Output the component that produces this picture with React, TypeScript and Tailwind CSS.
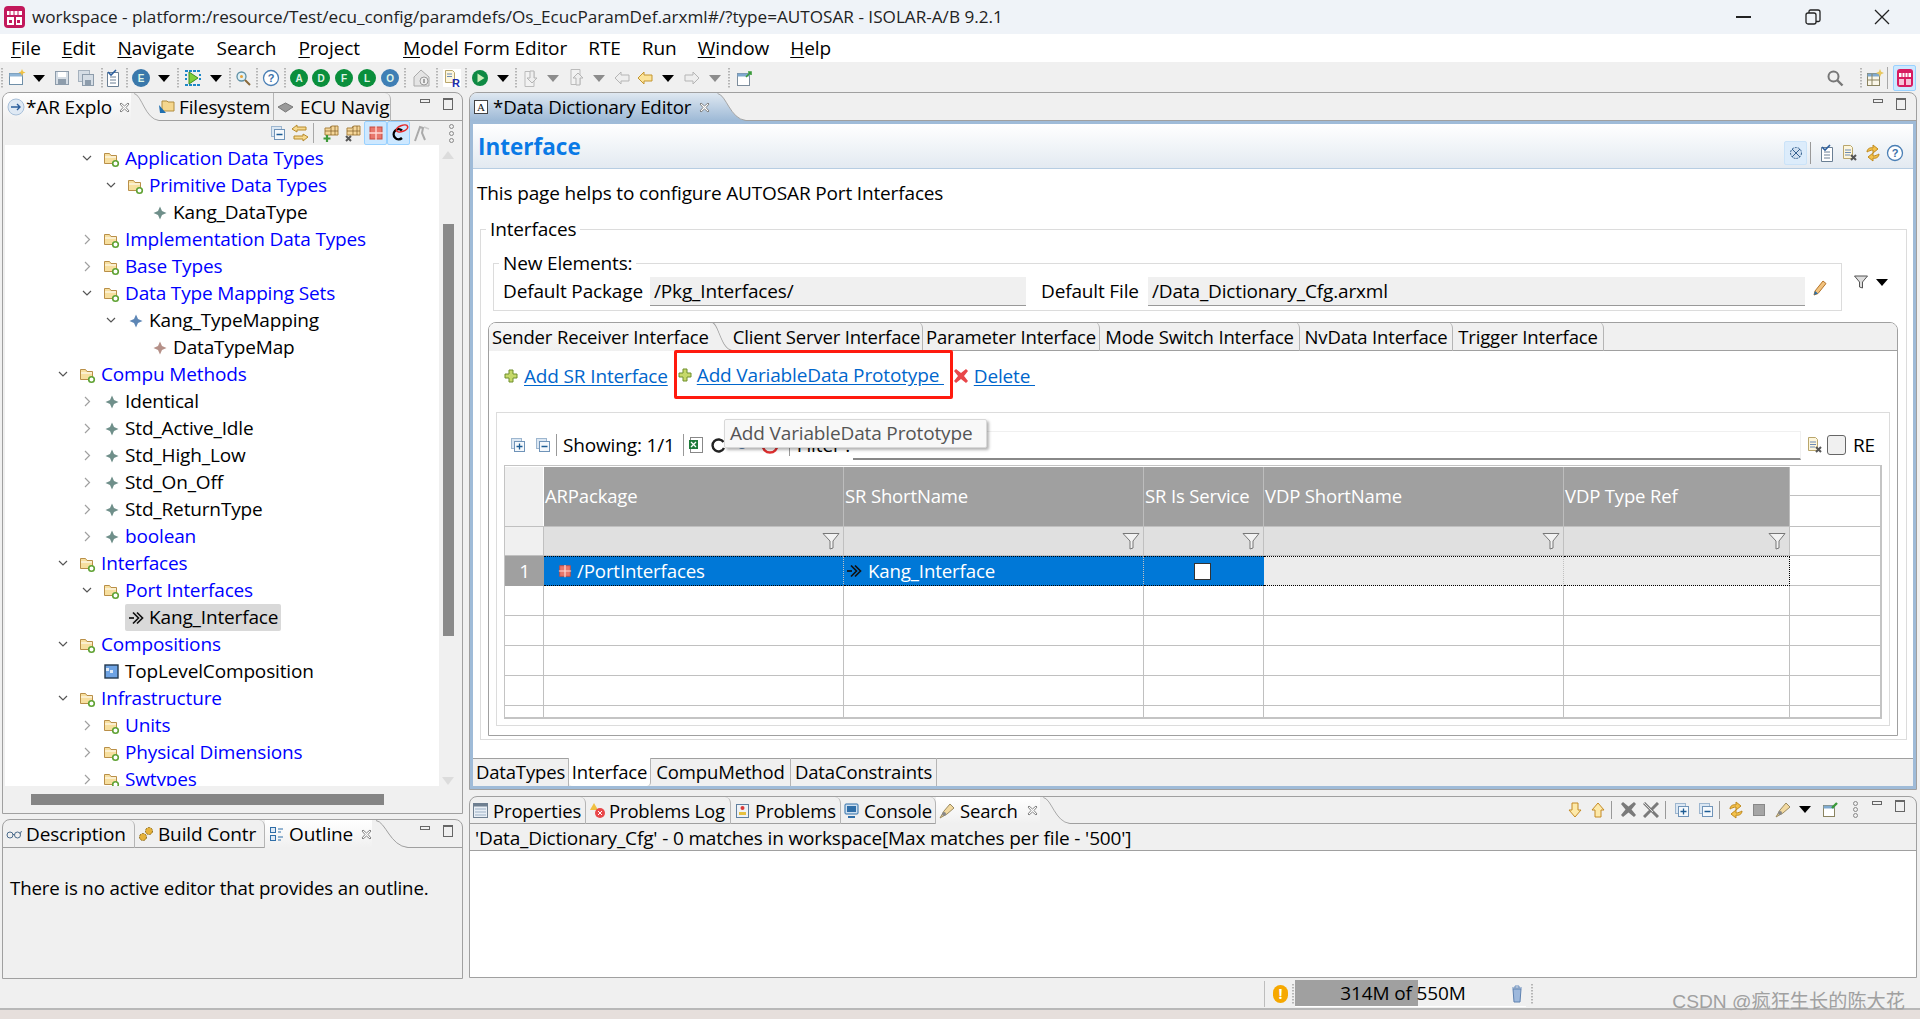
import React from "react";

const F = ({ cls = "" }: { cls?: string }) => (
  <svg width="17" height="18" viewBox="0 0 17 18" className={cls}>
    <path d="M1.5 3.5h5l1.5 2h5.5v8h-12z" fill="#f7df9f" stroke="#b98f48" />
    <path d="M2 7h11" stroke="#fff" />
    <circle cx="12.5" cy="13.5" r="2.8" fill="#fff" stroke="#5fa233" strokeWidth="1.6" />
  </svg>
);
const Star = ({ c = "#6f8f8a" }: { c?: string }) => (
  <svg width="14" height="14" viewBox="0 0 14 14">
    <path d="M7 0.5 L9 5 L13.5 7 L9 9 L7 13.5 L5 9 L0.5 7 L5 5 Z" fill={c} />
  </svg>
);
const ChevD = () => (
  <svg width="10" height="7" viewBox="0 0 10 7"><path d="M1 1l4 4 4-4" fill="none" stroke="#555" strokeWidth="1.2" /></svg>
);
const ChevR = () => (
  <svg width="7" height="11" viewBox="0 0 7 11"><path d="M1 1l4.5 4.5L1 10" fill="none" stroke="#a0a0a0" strokeWidth="1.2" /></svg>
);
const Arrow = ({ c = "#000" }: { c?: string }) => (
  <svg width="12" height="7" viewBox="0 0 12 7"><path d="M0 0h12L6 7z" fill={c} /></svg>
);
const Dots = () => (
  <svg width="2" height="20" viewBox="0 0 2 20">
    {[1, 4, 7, 10, 13, 16, 19].map((y) => <rect key={y} x="0" y={y - 1} width="2" height="1.5" fill="#b5b5b5" />)}
  </svg>
);
const Badge = ({ t, c = "#0a8f3c" }: { t: string; c?: string }) => (
  <div className="w-[18px] h-[18px] rounded-full flex items-center justify-center text-[10px] font-bold text-[#dff5e6] font-['Liberation_Sans',sans-serif]" style={{ background: c }}>{t}</div>
);
const Close = () => (
  <svg width="11" height="11" viewBox="0 0 11 11" className="shrink-0">
    <path d="M1 2l1-1 3.5 3L9 1l1 1-3 3.5L10 9l-1 1-3.5-3L2 10l-1-1 3-3.5z" fill="#fff" stroke="#777" strokeWidth="0.9" />
  </svg>
);
const MinMax = () => (
  <div className="flex items-start gap-[13px]">
    <div className="w-[10px] h-[4px] border border-[#666] mt-[1px]" />
    <div className="w-[10px] h-[12px] border border-[#666] border-t-[2px]" />
  </div>
);
const Plus = () => (
  <svg width="14" height="14" viewBox="0 0 14 14"><path d="M5 1h4v4h4v4H9v4H5V9H1V5h4z" fill="#c6d96a" stroke="#6f8f2c" /></svg>
);
const Expand = ({ minus = false }: { minus?: boolean }) => (
  <svg width="16" height="16" viewBox="0 0 16 16">
    <rect x="1.5" y="1.5" width="10" height="10" fill="#dbe7f3" stroke="#9db6cf" />
    <rect x="4.5" y="4.5" width="10" height="10" fill="#f4f8fc" stroke="#6f93b8" />
    <path d="M6.5 9.5h6" stroke="#1d5c94" strokeWidth="1.3" />
    {!minus && <path d="M9.5 6.5v6" stroke="#1d5c94" strokeWidth="1.3" />}
  </svg>
);
const Funnel = () => (
  <svg width="18" height="18" viewBox="0 0 18 18">
    <path d="M1 1.5h16L11 9v7l-3 1V9z" fill="#f2f2f2" stroke="#777" />
  </svg>
);
const SmallFunnel = () => (
  <svg width="14" height="14" viewBox="0 0 14 14"><path d="M0.5 1h13L8.5 7v6l-3-1V7z" fill="#ddd" stroke="#555" /></svg>
);
const Sync = () => (
  <svg width="18" height="18" viewBox="0 0 18 18">
    <path d="M3 8c0-3 3-5 6-4V1l5 4-5 4V6C7 6 5 7 3 8z" fill="#f3c14b" stroke="#c08a1e" />
    <path d="M15 10c0 3-3 5-6 4v3l-5-4 5-4v3c2 0 4-1 6-2z" fill="#f3c14b" stroke="#c08a1e" />
  </svg>
);
const Help = () => (
  <svg width="18" height="18" viewBox="0 0 18 18">
    <circle cx="9" cy="9" r="7.5" fill="#fff" stroke="#4a7fb5" strokeWidth="1.3" />
    <text x="9" y="13" textAnchor="middle" fontSize="11" fontWeight="700" fill="#3a70a8" fontFamily="Liberation Sans">?</text>
  </svg>
);
const CheckDoc = () => (
  <svg width="16" height="19" viewBox="0 0 16 19">
    <path d="M2.5 3.5h11v14h-11z" fill="#fff" stroke="#6a7f94" />
    <path d="M5 8h6M5 11h6M5 14h6" stroke="#6a7f94" />
    <path d="M3 3l3 3 5-5" fill="none" stroke="#2b5e9e" strokeWidth="1.6" />
  </svg>
);
const DocX = () => (
  <svg width="18" height="18" viewBox="0 0 18 18">
    <path d="M2.5 1.5h7l2 2v11h-9z" fill="#fdf6dc" stroke="#b9a66c" />
    <path d="M4 6h6M4 8.5h6M4 11h5" stroke="#6c8bb5" />
    <path d="M10 11l5 5m0-5l-5 5" stroke="#555" strokeWidth="2" />
  </svg>
);
const FolderTb = ({ x = false }: { x?: boolean }) => (
  <svg width="19" height="19" viewBox="0 0 19 19">
    <path d="M3 4h5l1.5-2H16v9H3z" fill="#f6d79a" stroke="#a9823f" />
    <path d="M9 2v9M13 2v9M3 7h13" stroke="#7b5a24" strokeWidth=".7" />
    {x ? <path d="M2 12l5 5m0-5l-5 5" stroke="#555" strokeWidth="2" /> : <path d="M5 11v7M1.5 14.5h7" stroke="#3f9a3a" strokeWidth="2.2" />}
  </svg>
);
const RedGrid = ({ s = 16 }: { s?: number }) => (
  <svg width={s} height={s} viewBox="0 0 16 16">
    <rect x="2" y="2" width="12" height="12" fill="#e8776c" stroke="#c84a3e" />
    <path d="M8 1v14M1 8h14" stroke="#ffd9d4" strokeWidth="1.4" />
  </svg>
);
const Iface = ({ c = "#111" }: { c?: string }) => (
  <svg width="16" height="14" viewBox="0 0 16 14">
    <path d="M0 7h5" stroke={c} strokeWidth="1.7" />
    <path d="M4 1.5l5.5 5.5L4 12.5M8 1.5l5.5 5.5L8 12.5" fill="none" stroke={c} strokeWidth="1.7" />
  </svg>
);

function Row({ d, open, leaf, icon, text, blue, hl }: { d: "0" | "1" | "2" | "3"; open?: boolean; leaf?: boolean; icon: React.ReactNode; text: string; blue?: boolean; hl?: boolean }) {
  const pad = { "0": "pl-[49px]", "1": "pl-[73px]", "2": "pl-[97px]", "3": "pl-[121px]" }[d];
  return (
    <div className={`h-[27px] shrink-0 flex items-center ${pad}`}>
      <div className="w-[18px] flex justify-center">{!leaf && (open ? <ChevD /> : <ChevR />)}</div>
      <div className={hl ? "ml-[5px] w-[24px] h-[27px] flex items-center justify-center bg-[#d9d9d9] rounded-l-[2px]" : "w-[29px] flex justify-center pr-[1px] pl-[3px]"}>{icon}</div>
      <span className={`leading-[27px] ${blue ? "text-[#0000ff]" : "text-black"} ${hl ? "bg-[#d9d9d9] pr-[3px] rounded-r-[2px]" : ""}`}>{text}</span>
    </div>
  );
}

const TabCurve = ({ fill = "#f0f0f0", w = 36, h = 28, id }: { fill?: string; w?: number; h?: number; id?: string }) => (
  <svg width={w} height={h} viewBox="0 0 36 28" preserveAspectRatio="none" className="shrink-0 self-stretch relative">
    {id && (
      <defs>
        <linearGradient id={id} x1="0" y1="0" x2="0" y2="1">
          <stop offset="0" stopColor="#dfe8f1" />
          <stop offset="1" stopColor="#9db9d6" />
        </linearGradient>
      </defs>
    )}
    <path d="M0 0H4C14 2 18 26 36 27.5V28H0Z" fill={id ? `url(#${id})` : fill} />
    <path d="M4 0.5C14 2 18 26 36 27.5" fill="none" stroke="#a0a0a0" />
  </svg>
);

const Link = ({ children }: { children: React.ReactNode }) => (
  <span className="text-[#0066cc] underline underline-offset-[2px] whitespace-pre">{children}</span>
);

function M({ first, rest, cls }: { first: string; rest: string; cls: string }) {
  return <span className={cls}><span className="underline underline-offset-[2px]">{first}</span>{rest}</span>;
}

function EmptyRow({ h = "h-[30px]" }: { h?: string }) {
  return (
    <div className={`flex ${h} shrink-0`}>
      <div className="w-[39px] border-r border-b border-[#c0c0c0]" />
      {["w-[300px]", "w-[300px]", "w-[120px]", "w-[300px]", "w-[226px]"].map((w, i) => (
        <div key={i} className={`${w} border-r border-b border-[#c0c0c0]`} />
      ))}
      <div className="flex-1 border-b border-[#c0c0c0]" />
    </div>
  );
}

export default function App() {
  return (
    <div className="w-[1920px] h-[1019px] overflow-hidden flex flex-col bg-[#f0f0f0] text-black text-[19px] whitespace-nowrap font-['Open_Sans','Noto_Sans',sans-serif] tracking-[-0.15px]">
      {/* Title bar */}
      <div className="h-[34px] shrink-0 bg-[#eff3f8] flex items-center">
        <svg width="24" height="24" viewBox="0 0 24 24" className="ml-[2px]">
          <rect x="2" y="1" width="21" height="22" rx="4" fill="#c2185b" />
          <rect x="5" y="6" width="15" height="4" fill="#fff" />
          <path d="M8 6v4M12 6v4M16 6v4" stroke="#c2185b" />
          <rect x="5" y="12" width="7" height="8" fill="#fff" /><rect x="14" y="12" width="6" height="8" fill="#fff" />
          <rect x="7" y="15" width="3" height="3" fill="#c2185b" /><rect x="15" y="15" width="3" height="3" fill="#c2185b" />
        </svg>
        <span className="ml-[6px] text-[17.15px] tracking-normal text-[#222]">workspace - platform:/resource/Test/ecu_config/paramdefs/Os_EcucParamDef.arxml#/?type=AUTOSAR - ISOLAR-A/B 9.2.1</span>
        <div className="ml-auto flex items-center">
          <div className="w-[15px] h-[1.5px] bg-[#222] mr-[54px]" />
          <svg width="16" height="16" viewBox="0 0 16 16" className="mr-[53px]"><rect x="1" y="4" width="10" height="11" rx="2" fill="none" stroke="#222" strokeWidth="1.3" /><path d="M4 4V2.5C4 1.7 4.6 1 5.5 1H13c1 0 2 1 2 2v8c0 1-.7 1.5-1.5 1.5H11" fill="none" stroke="#222" strokeWidth="1.3" /></svg>
          <svg width="16" height="16" viewBox="0 0 16 16" className="mr-[30px]"><path d="M1 1l14 14M15 1L1 15" stroke="#222" strokeWidth="1.3" /></svg>
        </div>
      </div>
      {/* Menu */}
      <div className="h-[28px] shrink-0 bg-white flex items-center tracking-[-0.05px]">
        <M first="F" rest="ile" cls="ml-[11px]" />
        <M first="E" rest="dit" cls="ml-[21px]" />
        <M first="N" rest="avigate" cls="ml-[22px]" />
        <span className="ml-[22px]">Search</span>
        <M first="P" rest="roject" cls="ml-[22px]" />
        <M first="M" rest="odel Form Editor" cls="ml-[43px]" />
        <span className="ml-[21px]">RTE</span>
        <span className="ml-[21px]">Run</span>
        <M first="W" rest="indow" cls="ml-[21px]" />
        <M first="H" rest="elp" cls="ml-[21px]" />
      </div>
      {/* Main toolbar */}
      <div className="h-[30px] shrink-0 flex items-center pt-[2px]">
        <div className="ml-[1px] w-[2px]"><Dots /></div>
        <div className="ml-[4px] w-[20px] flex justify-center">
          <svg width="18" height="18" viewBox="0 0 18 18"><rect x="1.5" y="4.5" width="13" height="11" fill="#fff" stroke="#6f8fa8" /><rect x="1.5" y="4.5" width="13" height="3" fill="#8fb5d6" /><path d="M14 0l1 2.5 2.5 1-2.5 1-1 2.5-1-2.5-2.5-1 2.5-1z" fill="#f0c040" /></svg>
        </div>
        <div className="ml-[5px] w-[14px] flex justify-center"><Arrow /></div>
        <div className="ml-[6px] w-[20px] flex justify-center"><svg width="16" height="16" viewBox="0 0 16 16"><rect x="1.5" y="1.5" width="13" height="13" fill="#d5dde5" stroke="#8d9cab" /><rect x="4" y="2" width="8" height="5" fill="#fff" /><rect x="4" y="9" width="8" height="5" fill="#8d9cab" /></svg></div>
        <div className="ml-[4px] w-[20px] flex justify-center"><svg width="18" height="18" viewBox="0 0 18 18"><rect x="1.5" y="1.5" width="11" height="11" fill="#d5dde5" stroke="#a5b1bd" /><rect x="5.5" y="5.5" width="11" height="11" fill="#d5dde5" stroke="#8d9cab" /><rect x="8" y="11" width="6" height="5" fill="#8d9cab" /></svg></div>
        <div className="ml-[5px] w-[2px]"><Dots /></div>
        <div className="w-[20px] flex justify-center"><CheckDoc /></div>
        <div className="ml-[3px] w-[2px]"><Dots /></div>
        <div className="ml-[3px] w-[20px] flex justify-center"><Badge t="E" c="#3a78ab" /></div>
        <div className="ml-[6px] w-[14px] flex justify-center"><Arrow /></div>
        <div className="ml-[6px] w-[2px]"><Dots /></div>
        <div className="ml-[4px] w-[20px] flex justify-center"><svg width="18" height="18" viewBox="0 0 18 18"><path d="M1 2h16M1 16h16" stroke="#1e88c7" strokeWidth="2" strokeDasharray="3 1" /><path d="M5 3l9 6-9 6z" fill="#7fcf3a" stroke="#3f8f1f" /><path d="M2 5v8M16 5v8" stroke="#1e88c7" strokeWidth="2" strokeDasharray="2 2" /></svg></div>
        <div className="ml-[6px] w-[14px] flex justify-center"><Arrow /></div>
        <div className="ml-[6px] w-[2px]"><Dots /></div>
        <div className="ml-[2px] w-[20px] flex justify-center"><svg width="16" height="16" viewBox="0 0 16 16"><circle cx="6.5" cy="6.5" r="4.5" fill="#dff1f5" stroke="#5d8fa5" strokeWidth="1.3" /><circle cx="6.5" cy="6.5" r="1.5" fill="#e8a23a" /><path d="M10 10l5 5" stroke="#8a6a3a" strokeWidth="2" /></svg></div>
        <div className="ml-[3px] w-[2px]"><Dots /></div>
        <div className="ml-[3px] w-[20px] flex justify-center"><Help /></div>
        <div className="ml-[3px] w-[2px]"><Dots /></div>
        <div className="ml-[3px] w-[20px] flex justify-center"><Badge t="A" /></div>
        <div className="ml-[2px] w-[20px] flex justify-center"><Badge t="D" /></div>
        <div className="ml-[3px] w-[20px] flex justify-center"><Badge t="F" /></div>
        <div className="ml-[3px] w-[20px] flex justify-center"><Badge t="L" /></div>
        <div className="ml-[3px] w-[20px] flex justify-center"><Badge t="O" c="#3f7fb5" /></div>
        <div className="ml-[4px] w-[2px]"><Dots /></div>
        <div className="ml-[5px] w-[20px] flex justify-center"><svg width="17" height="18" viewBox="0 0 17 18"><path d="M8 1L1 8v9h15V8z" fill="#e4e4e4" stroke="#aaa" /><circle cx="11" cy="12" r="4" fill="#eee" stroke="#999" /><path d="M11 10v4" stroke="#888" strokeWidth="1.5" /></svg></div>
        <div className="ml-[5px] w-[2px]"><Dots /></div>
        <div className="ml-[4px] w-[20px] flex justify-center"><svg width="18" height="18" viewBox="0 0 18 18"><rect width="18" height="18" fill="#fff" /><path d="M2.5 1.5h7l2 2v10h-9z" fill="#fdf6dc" stroke="#b9a66c" /><path d="M4 5h5M4 7.5h5" stroke="#6c8bb5" /><text x="9" y="18" fontSize="11" fontWeight="700" fill="#1a2db0" fontFamily="Liberation Sans">R</text></svg></div>
        <div className="ml-[3px] w-[2px]"><Dots /></div>
        <div className="ml-[3px] w-[20px] flex justify-center"><svg width="18" height="18" viewBox="0 0 18 18"><circle cx="9" cy="9" r="8" fill="#0f8a44" /><path d="M6.5 4.5l7 4.5-7 4.5z" fill="#cdeebb" /></svg></div>
        <div className="ml-[6px] w-[14px] flex justify-center"><Arrow /></div>
        <div className="ml-[5px] w-[2px]"><Dots /></div>
        <div className="ml-[4px] w-[20px] flex justify-center"><svg width="16" height="20" viewBox="0 0 16 20"><path d="M2 3.5h9v15H2z" fill="#f2f2f2" stroke="#bbb" /><path d="M7 3v7H4l5 5 5-5h-3V3z" fill="#eee" stroke="#b5b5b5" /></svg></div>
        <div className="ml-[5px] w-[14px] flex justify-center"><Arrow c="#8c8c8c" /></div>
        <div className="ml-[7px] w-[20px] flex justify-center"><svg width="16" height="20" viewBox="0 0 16 20"><path d="M2 1.5h9v15H2z" fill="#f2f2f2" stroke="#bbb" /><path d="M7 17v-7H4l5-5 5 5h-3v7z" fill="#eee" stroke="#b5b5b5" /></svg></div>
        <div className="ml-[5px] w-[14px] flex justify-center"><Arrow c="#8c8c8c" /></div>
        <div className="ml-[6px] w-[20px] flex justify-center"><svg width="16" height="14" viewBox="0 0 16 14"><path d="M1 7l6-6v3h8v6H7v3z" fill="#eee" stroke="#b5b5b5" /></svg></div>
        <div className="ml-[3px] w-[20px] flex justify-center"><svg width="16" height="14" viewBox="0 0 16 14"><path d="M1 7l6-6v3h8v6H7v3z" fill="#fbe39a" stroke="#c4952f" /></svg></div>
        <div className="ml-[6px] w-[14px] flex justify-center"><Arrow /></div>
        <div className="ml-[7px] w-[20px] flex justify-center"><svg width="16" height="14" viewBox="0 0 16 14"><path d="M15 7L9 1v3H1v6h8v3z" fill="#eee" stroke="#b5b5b5" /></svg></div>
        <div className="ml-[6px] w-[14px] flex justify-center"><Arrow c="#8c8c8c" /></div>
        <div className="ml-[6px] w-[2px]"><Dots /></div>
        <div className="ml-[4px] w-[20px] flex justify-center"><svg width="17" height="17" viewBox="0 0 17 17"><rect x="1.5" y="3.5" width="12" height="12" fill="#fff" stroke="#7d8d9c" /><rect x="1.5" y="3.5" width="12" height="3" fill="#7fa9cf" /><path d="M10 7l5-5m-3 0h3v3" fill="none" stroke="#3a9a3a" strokeWidth="1.6" /></svg></div>
        <div className="ml-auto w-[20px] flex justify-center"><svg width="18" height="18" viewBox="0 0 18 18"><circle cx="7.5" cy="7.5" r="5" fill="none" stroke="#777" strokeWidth="2" /><path d="M11 11l5.5 5.5" stroke="#777" strokeWidth="2.4" /></svg></div>
        <div className="ml-[15px] w-[2px]"><Dots /></div>
        <div className="ml-[3px] w-[20px] flex justify-center"><svg width="18" height="18" viewBox="0 0 18 18"><rect x="1.5" y="4.5" width="12" height="12" fill="#faf6e8" stroke="#8a8360" /><rect x="1.5" y="4.5" width="12" height="3" fill="#7fa9cf" /><path d="M6 5v11M1 11h12" stroke="#8a8360" /><path d="M14 0l1.2 2.8L18 4l-2.8 1.2L14 8l-1.2-2.8L10 4l2.8-1.2z" fill="#e8c860" /></svg></div>
        <div className="ml-[2px] w-px h-[22px] bg-[#a8a8a8]" />
        <div className="ml-[5px] mr-[4px] w-[23px] h-[26px] bg-[#cde8ff] border border-[#99d1ff] rounded-[2px] flex items-center justify-center">
          <svg width="18" height="20" viewBox="0 0 18 20"><rect x="1" y="1" width="16" height="18" rx="3" fill="#d81b60" /><rect x="3" y="5" width="12" height="4" fill="#fff" /><path d="M6 5v4M9 5v4M12 5v4" stroke="#d81b60" /><rect x="3" y="11" width="5" height="6" fill="#f6c4d8" /><rect x="10" y="11" width="5" height="6" fill="#f6c4d8" /></svg>
        </div>
      </div>
      {/* Main */}
      <div className="h-[887px] shrink-0 flex pl-[2px] pr-[3px] gap-[6px]">
        {/* Left column */}
        <div className="w-[461px] shrink-0 flex flex-col gap-[5px]">
          <div className="h-[722px] shrink-0 flex flex-col border border-[#a0a0a0] rounded-t-[8px] overflow-hidden">
            <div className="h-[28px] shrink-0 flex relative">
              <div className="absolute left-0 right-0 bottom-0 h-px bg-[#a0a0a0]" />
              <div className="relative flex items-center pl-[4px] bg-linear-to-b from-white to-[#f0f0f0] w-[128px]">
                <svg width="18" height="18" viewBox="0 0 18 18" className="shrink-0"><circle cx="9" cy="9" r="8" fill="#dfe9f4" stroke="#a7bfd8" /><path d="M4 9h9M10 6l3 3-3 3" fill="none" stroke="#2a5d9c" strokeWidth="1.4" /></svg>
                <span className="ml-[1px]">*AR Explo</span>
                <span className="ml-[7px] flex"><Close /></span>
              </div>
              <TabCurve w={28} />
              <div className="relative flex items-center -ml-[1px] w-[116px] border-r border-[#b5b5b5]">
                <svg width="18" height="16" viewBox="0 0 18 16" className="shrink-0"><path d="M4 2h5l1 1h6v9H4z" fill="#f5d78e" stroke="#b08c3f" /><path d="M1 6l7 8H2z" fill="#1f6fb0" /></svg>
                <span className="ml-[3px]">Filesystem</span>
              </div>
              <div className="relative flex items-center pl-[3px] w-[117px] border-r border-[#b5b5b5] rounded-tr-[6px]">
                <svg width="17" height="11" viewBox="0 0 17 11" className="shrink-0"><path d="M8.5 1L16 5l-7.5 5L1 5z" fill="#9a9a9a" stroke="#777" /></svg>
                <span className="ml-[6px]">ECU Navig</span>
              </div>
              <div className="relative ml-auto mr-[9px] mt-[5px]"><MinMax /></div>
            </div>
            <div className="h-[24px] shrink-0 flex items-center relative">
              <div className="ml-[265px] w-[20px] flex justify-center"><Expand minus /></div>
              <div className="ml-[2px] w-[20px] flex justify-center"><svg width="18" height="18" viewBox="0 0 18 18"><path d="M1 5l5-4v2h9v3H6v2z" fill="#f6d98f" stroke="#b78a2c" /><path d="M17 13l-5 4v-2H3v-3h9v-2z" fill="#f6d98f" stroke="#b78a2c" /></svg></div>
              <div className="ml-[3px] w-px h-[20px] bg-[#a8a8a8]" />
              <div className="ml-[7px] w-[20px] flex justify-center"><FolderTb /></div>
              <div className="ml-[2px] w-[20px] flex justify-center"><FolderTb x /></div>
              <div className="ml-[1px] w-[23px] h-[24px] bg-[#cde8ff] border border-[#99d1ff] rounded-[2px] flex items-center justify-center"><RedGrid /></div>
              <div className="w-[23px] h-[24px] bg-[#cde8ff] border border-[#99d1ff] rounded-[2px] flex items-center justify-center">
                <svg width="20" height="20" viewBox="0 0 20 20">
                  <path d="M13 7.5A5 5 0 1 0 13 15" fill="none" stroke="#000" strokeWidth="2.4" />
                  <ellipse cx="13" cy="5.5" rx="6" ry="3" fill="none" stroke="#e52a2a" strokeWidth="1.6" transform="rotate(-20 13 5.5)" />
                </svg>
              </div>
              <div className="w-[23px] flex justify-center"><svg width="19" height="17" viewBox="0 0 19 17"><path d="M3 16L8 2l3 1-1 5 3 7" fill="none" stroke="#aaa" strokeWidth="2" /><path d="M12 2l5 2" stroke="#ccc" strokeWidth="1.5" /></svg></div>
              <div className="ml-[14px] w-[8px] flex flex-col items-center gap-[2px]">
                {[0, 1, 2].map((i) => <div key={i} className="w-[5px] h-[5px] rounded-full border border-[#888]" />)}
              </div>
            </div>
            <div className="flex-1 flex min-h-0">
              <div className="flex-1 flex flex-col min-h-0">
                <div className="h-[641px] shrink-0 w-[434px] ml-[2px] bg-white overflow-hidden flex flex-col">
                  <Row d="1" open icon={<F />} text="Application Data Types" blue />
                  <Row d="2" open icon={<F />} text="Primitive Data Types" blue />
                  <Row d="3" leaf icon={<Star />} text="Kang_DataType" />
                  <Row d="1" icon={<F />} text="Implementation Data Types" blue />
                  <Row d="1" icon={<F />} text="Base Types" blue />
                  <Row d="1" open icon={<F />} text="Data Type Mapping Sets" blue />
                  <Row d="2" open icon={<Star c="#5d86b5" />} text="Kang_TypeMapping" />
                  <Row d="3" leaf icon={<Star c="#b59088" />} text="DataTypeMap" />
                  <Row d="0" open icon={<F />} text="Compu Methods" blue />
                  <Row d="1" icon={<Star />} text="Identical" />
                  <Row d="1" icon={<Star />} text="Std_Active_Idle" />
                  <Row d="1" icon={<Star />} text="Std_High_Low" />
                  <Row d="1" icon={<Star />} text="Std_On_Off" />
                  <Row d="1" icon={<Star />} text="Std_ReturnType" />
                  <Row d="1" icon={<Star />} text="boolean" blue />
                  <Row d="0" open icon={<F />} text="Interfaces" blue />
                  <Row d="1" open icon={<F />} text="Port Interfaces" blue />
                  <Row d="2" leaf icon={<Iface />} text="Kang_Interface" hl />
                  <Row d="0" open icon={<F />} text="Compositions" blue />
                  <Row d="1" leaf icon={<svg width="15" height="15" viewBox="0 0 15 15"><rect x="1" y="1" width="13" height="13" fill="#6ea3e4" stroke="#23384f" strokeWidth="1.4" /><rect x="2" y="4" width="3" height="3" fill="#dfeaf6" /><rect x="6" y="6" width="3" height="3" fill="#dfeaf6" /></svg>} text="TopLevelComposition" />
                  <Row d="0" open icon={<F />} text="Infrastructure" blue />
                  <Row d="1" icon={<F />} text="Units" blue />
                  <Row d="1" icon={<F />} text="Physical Dimensions" blue />
                  <Row d="1" icon={<F />} text="Swtypes" blue />
                </div>
                <div className="h-[11px] mt-[8px] ml-[28px] w-[353px] bg-[#858585]" />
              </div>
              <div className="w-[23px] shrink-0 flex flex-col items-center pr-[5px]">
                <svg width="12" height="8" viewBox="0 0 12 8" className="mt-[6px]"><path d="M6 0l6 8H0z" fill="#dcdcdc" /></svg>
                <div className="w-[11px] h-[412px] mt-[65px] bg-[#8a8a8a]" />
                <svg width="12" height="8" viewBox="0 0 12 8" className="mt-[141px]"><path d="M6 8L12 0H0z" fill="#dcdcdc" /></svg>
              </div>
            </div>
          </div>
          <div className="h-[160px] shrink-0 flex flex-col border border-[#a0a0a0] rounded-t-[8px] overflow-hidden">
            <div className="h-[28px] shrink-0 flex relative">
              <div className="absolute left-0 right-0 bottom-0 h-px bg-[#a0a0a0]" />
              <div className="relative flex items-center pl-[3px] w-[132px] border-r border-[#b5b5b5] rounded-tr-[6px]">
                <svg width="16" height="10" viewBox="0 0 16 10" className="shrink-0"><circle cx="4" cy="6" r="3" fill="none" stroke="#4a6a8a" /><circle cx="11.5" cy="6" r="3" fill="none" stroke="#4a6a8a" /><path d="M7 5.5h1.5M14 5l1.5-3" stroke="#4a6a8a" /></svg>
                <span className="ml-[4px]">Description</span>
              </div>
              <div className="relative flex items-center pl-[3px] w-[130px] border-r border-[#b5b5b5] rounded-tr-[6px]">
                <svg width="17" height="17" viewBox="0 0 17 17" className="shrink-0"><circle cx="11" cy="5" r="3.5" fill="#e6b23a" stroke="#8a6a1f" strokeDasharray="2 1" /><circle cx="5" cy="11" r="3.5" fill="#e6b23a" stroke="#8a6a1f" strokeDasharray="2 1" /></svg>
                <span className="ml-[3px]">Build Contr</span>
              </div>
              <div className="relative flex items-center pl-[5px] bg-linear-to-b from-white to-[#f0f0f0] w-[107px]">
                <svg width="14" height="16" viewBox="0 0 14 16" className="shrink-0"><rect x=".5" y="1.5" width="5" height="5" fill="#dfe9f4" stroke="#2f6ea8" /><rect x=".5" y="9.5" width="5" height="5" fill="#dfe9f4" stroke="#2f6ea8" /><path d="M8 3h5M8 6h3M8 11h5M8 14h3" stroke="#2f6ea8" /></svg>
                <span className="ml-[5px]">Outline</span>
                <span className="ml-[8px] flex"><Close /></span>
              </div>
              <TabCurve w={36} />
              <div className="relative ml-auto mr-[9px] mt-[5px]"><MinMax /></div>
            </div>
            <div className="pl-[7px] pt-[27px] leading-[26px] text-[18.7px]">There is no active editor that provides an outline.</div>
          </div>
        </div>
        {/* Right column */}
        <div className="flex-1 min-w-0 flex flex-col gap-[6px]">
          <div className="h-[698px] shrink-0 flex flex-col border border-[#a0a0a0] rounded-t-[8px] overflow-hidden">
            <div className="h-[28px] shrink-0 flex relative">
              <div className="absolute left-0 right-0 bottom-0 h-px bg-[#a0a0a0]" />
              <div className="relative flex items-center pl-[3px] w-[244px] bg-linear-to-b from-[#dfe8f1] to-[#9db9d6]">
                <svg width="16" height="16" viewBox="0 0 16 16" className="shrink-0"><rect x="1.5" y="1.5" width="13" height="13" fill="#fff" stroke="#444" /><text x="8" y="12" textAnchor="middle" fontSize="11" fontFamily="Liberation Serif" fill="#111">A</text></svg>
                <span className="ml-[4px] text-[18.7px]">*Data Dictionary Editor</span>
                <span className="ml-[8px] flex shrink-0"><Close /></span>
              </div>
              <TabCurve id="edTab" w={32} />
              <div className="relative ml-auto mr-[10px] mt-[5px]"><MinMax /></div>
            </div>
            <div className="flex-1 min-h-0 flex flex-col border-[3px] border-[#9fbbd8]">
              <div className="h-[45px] shrink-0 flex items-center bg-linear-to-b from-white to-[#e3eaf1] border-b border-[#b7cde2]">
                <span className="ml-[5px] pt-[2px] text-[22.5px] font-bold text-[#0a7ae6] tracking-normal">Interface</span>
                <div className="ml-auto mr-[8px] mt-[14px] flex items-center">
                  <div className="w-[23px] h-[24px] bg-[#dcecfb] border border-[#cbe3f8] rounded-[2px] flex items-center justify-center"><svg width="14" height="14" viewBox="0 0 14 14"><circle cx="7" cy="7" r="5.5" fill="#cfdff0" stroke="#33608f" strokeDasharray="2 1" /><path d="M3 3l8 8M11 3l-8 8" stroke="#33608f" /></svg></div>
                  <div className="ml-[3px] w-px h-[22px] bg-[#999]" />
                  <div className="ml-[6px] w-[20px] flex justify-center"><CheckDoc /></div>
                  <div className="ml-[3px] w-[20px] flex justify-center"><DocX /></div>
                  <div className="ml-[3px] w-[20px] flex justify-center"><Sync /></div>
                  <div className="ml-[2px] w-[20px] flex justify-center"><Help /></div>
                </div>
              </div>
              <div className="flex-1 min-h-0 bg-white flex flex-col">
                <div className="pl-[4px] pt-[11px] h-[47px] shrink-0 leading-[26px]">This page helps to configure AUTOSAR Port Interfaces</div>
                <fieldset className="ml-[7px] mr-[6px] h-[524px] shrink-0 border border-[#dcdcdc] px-0">
                  <legend className="ml-[5px] px-[4px] leading-[26px]">Interfaces</legend>
                  <div className="flex items-start pl-[12px]">
                    <fieldset className="w-[1349px] h-[61px] shrink-0 border border-[#dcdcdc] mt-[8px]">
                      <legend className="ml-[5px] px-[4px] leading-[26px]">New Elements:</legend>
                      <div className="flex items-center h-[30px] pl-[9px]">
                        <span className="w-[147px] shrink-0">Default Package</span>
                        <div className="w-[376px] h-[29px] shrink-0 bg-[#f0f0f0] border-b border-[#999] pl-[4px] leading-[28px]">/Pkg_Interfaces/</div>
                        <span className="w-[122px] shrink-0 pl-[15px]">Default File</span>
                        <div className="w-[657px] h-[29px] shrink-0 bg-[#f0f0f0] border-b border-[#999] pl-[4px] leading-[28px]">/Data_Dictionary_Cfg.arxml</div>
                        <div className="ml-[7px] -mt-[6px] flex"><svg width="16" height="18" viewBox="0 0 16 18"><path d="M2 16l1-4 8-10 3 2.5-8 10z" fill="#f1c27d" stroke="#b5742a" /><path d="M2 16l1-4 3 2.5z" fill="#2a6fa8" /></svg></div>
                      </div>
                    </fieldset>
                    <div className="ml-[12px] mt-[33px] flex items-center gap-[8px]">
                      <SmallFunnel /><Arrow />
                    </div>
                  </div>
                  <div className="ml-[7px] mt-[11px] w-[1410px] h-[414px] border border-[#a0a0a0] rounded-t-[8px] flex flex-col overflow-hidden">
                    <div className="h-[29px] shrink-0 flex relative bg-[#f0f0f0] -mt-[1px] text-[18.5px]">
                      <div className="absolute left-0 right-0 bottom-0 h-px bg-[#a0a0a0]" />
                      <div className="relative flex items-center pl-[3px] w-[221px] bg-linear-to-b from-[#f8f8f8] to-[#f0f0f0]">Sender Receiver Interface</div>
                      <TabCurve w={22} h={29} />
                      <div className="relative flex items-center justify-center -ml-[1px] w-[192px] border-r border-[#b5b5b5] rounded-tr-[6px]">Client Server Interface</div>
                      <div className="relative flex items-center justify-center w-[177px] border-r border-[#b5b5b5] rounded-tr-[6px]">Parameter Interface</div>
                      <div className="relative flex items-center justify-center w-[200px] border-r border-[#b5b5b5] rounded-tr-[6px]">Mode Switch Interface</div>
                      <div className="relative flex items-center justify-center w-[153px] border-r border-[#b5b5b5] rounded-tr-[6px]">NvData Interface</div>
                      <div className="relative flex items-center justify-center w-[151px] border-r border-[#b5b5b5] rounded-tr-[6px]">Trigger Interface</div>
                    </div>
                    <div className="h-[50px] shrink-0 flex items-center relative">
                      <div className="ml-[15px] flex"><Plus /></div>
                      <div className="ml-[6px]"><Link>Add SR Interface</Link></div>
                      <div className="ml-[6px] w-[279px] h-[49px] -mt-[3px] shrink-0 border-[3px] border-[#ff1a0e] rounded-[2px] flex items-center pl-[1px]">
                        <Plus />
                        <div className="ml-[5px] pt-[2px]"><Link>Add VariableData Prototype </Link></div>
                      </div>
                      <div className="ml-[1px] flex">
                        <svg width="14" height="14" viewBox="0 0 14 14"><path d="M2 0l5 4 5-4 2 2-4 5 4 5-2 2-5-4-5 4-2-2 4-5-4-5z" fill="#e8474a" /></svg>
                      </div>
                      <div className="ml-[6px]"><Link>Delete </Link></div>
                    </div>
                    <div className="relative mx-[7px] h-[314px] shrink-0 mt-[11px] border border-[#dcdcdc] flex flex-col">
                      <div className="h-[52px] shrink-0 flex items-center pt-[12px]">
                        <div className="ml-[13px] flex"><Expand /></div>
                        <div className="ml-[9px] flex"><Expand minus /></div>
                        <div className="ml-[5px] w-px h-[22px] bg-[#999]" />
                        <span className="ml-[6px]">Showing: 1/1</span>
                        <div className="ml-[8px] w-px h-[22px] bg-[#999]" />
                        <div className="ml-[4px] flex"><svg width="16" height="18" viewBox="0 0 16 18"><rect x="2.5" y="1.5" width="12" height="15" fill="#fff" stroke="#888" /><rect x="1" y="4" width="9" height="9" fill="#1e7a3a" /><path d="M3 6l5 5M8 6l-5 5" stroke="#fff" strokeWidth="1.3" /></svg></div>
                        <div className="ml-[7px] flex"><svg width="15" height="15" viewBox="0 0 15 15"><path d="M12.5 4A6 6 0 1 0 13 10" fill="none" stroke="#222" strokeWidth="2.4" /></svg></div>
                        <div className="ml-[9px] flex"><svg width="14" height="14" viewBox="0 0 14 14"><circle cx="7" cy="7" r="4" fill="#5d86b5" /></svg></div>
                        <div className="ml-[11px] flex"><svg width="20" height="20" viewBox="0 0 20 20"><circle cx="10" cy="10" r="7.5" fill="none" stroke="#e03030" strokeWidth="2.4" /></svg></div>
                        <div className="ml-[9px] w-px h-[22px] bg-[#999]" />
                        <span className="ml-[7px]">Filter :</span>
                        <div className="ml-[3px] flex-1 h-[29px] border-t border-r border-[#f0f0f0] border-b-2 border-b-[#888]" />
                        <div className="ml-[5px] flex"><DocX /></div>
                        <div className="ml-[3px] w-[19px] h-[20px] rounded-[3px] border border-[#666] bg-[#f0f0f0]" />
                        <span className="ml-[7px] mr-[14px]">RE</span>
                      </div>
                      <div className="mx-[7px] h-[254px] shrink-0 border-2 border-[#c4c4c4] border-l-[1px] border-t-[1px] overflow-hidden flex flex-col bg-white">
                        <div className="flex h-[60px] shrink-0 pt-[1px]">
                          <div className="w-[39px] bg-[#f0f0f0] border-r border-[#fff]" />
                          {[["ARPackage", "w-[300px]"], ["SR ShortName", "w-[300px]"], ["SR Is Service", "w-[120px]"], ["VDP ShortName", "w-[300px]"], ["VDP Type Ref", "w-[226px]"]].map(([t, w]) => (
                            <div key={t} className={`${w} bg-[#a0a0a0] border-r border-[#bdbdbd] flex items-center text-white pl-[1px] pb-[2px] overflow-hidden text-[18.5px]`}>{t}</div>
                          ))}
                          <div className="flex-1 flex flex-col"><div className="h-[29px] border-b border-[#c0c0c0]" /></div>
                        </div>
                        <div className="flex h-[30px] shrink-0 border-t border-[#c0c0c0]">
                          <div className="w-[39px] bg-[#f0f0f0] border-r border-b border-[#c0c0c0]" />
                          {["w-[300px]", "w-[300px]", "w-[120px]", "w-[300px]", "w-[226px]"].map((w, i) => (
                            <div key={i} className={`${w} bg-[#e0e0e0] border-r border-b border-[#c0c0c0] flex items-center justify-end pr-[3px]`}><Funnel /></div>
                          ))}
                          <div className="flex-1 border-b border-[#c0c0c0]" />
                        </div>
                        <div className="flex h-[30px] shrink-0">
                          <div className="w-[39px] bg-[#a0a0a0] text-white flex items-center justify-center">1</div>
                          <div className="w-[300px] bg-[#0078d7] border-r border-[#c0c0c0] border-y border-y-black border-dotted flex items-center text-white pl-[14px]"><RedGrid s={14} /><span className="ml-[5px] text-[18.7px]">/PortInterfaces</span></div>
                          <div className="w-[300px] bg-[#0078d7] border-r border-[#c0c0c0] border-y border-y-black border-dotted flex items-center text-white pl-[3px]"><Iface /><span className="ml-[5px] text-[18.7px]">Kang_Interface</span></div>
                          <div className="w-[120px] bg-[#0078d7] border-y border-y-black border-dotted flex items-center justify-center pr-[4px]"><div className="w-[17px] h-[17px] bg-white border border-[#333]" /></div>
                          <div className="w-[300px] bg-[#ececec] border-r border-[#c0c0c0] border-y border-y-black border-dotted" />
                          <div className="w-[226px] bg-[#ececec] border-r border-black border-y border-y-black border-dotted" />
                          <div className="flex-1 border-b border-[#c0c0c0]" />
                        </div>
                        <EmptyRow /><EmptyRow /><EmptyRow /><EmptyRow /><EmptyRow />
                      </div>
                      <div className="absolute left-[227px] top-[6px] w-[263px] h-[29px] bg-[#f8f8f8] border border-[#d8d8d8] rounded-[2px] shadow-[2px_2px_3px_rgba(0,0,0,0.3)] flex items-center pl-[5px] text-[#555]">Add VariableData Prototype</div>
                    </div>
                  </div>
                </fieldset>
                <div className="mt-auto h-[28px] shrink-0 flex relative bg-[#f0f0f0] text-[18.5px]">
                  <div className="absolute left-0 right-0 top-0 h-px bg-[#a0a0a0]" />
                  <div className="relative flex items-center justify-center w-[96px] border-r border-[#b5b5b5]">DataTypes</div>
                  <div className="relative flex items-center justify-center w-[82px] bg-white rounded-b-[4px] border-r border-[#b5b5b5]">Interface</div>
                  <div className="relative flex items-center justify-center w-[140px] border-r border-[#b5b5b5]">CompuMethod</div>
                  <div className="relative flex items-center justify-center w-[146px] border-r border-[#b5b5b5]">DataConstraints</div>
                </div>
              </div>
            </div>
          </div>
          <div className="h-[182px] shrink-0 flex flex-col border border-[#a0a0a0] rounded-t-[8px] overflow-hidden">
            <div className="h-[27px] shrink-0 flex relative text-[18.5px]">
              <div className="absolute left-0 right-0 bottom-0 h-px bg-[#a0a0a0]" />
              <div className="relative flex items-center pl-[3px] w-[116px] border-r border-[#b5b5b5] rounded-tr-[6px]">
                <svg width="15" height="15" viewBox="0 0 15 15" className="shrink-0"><rect x=".5" y=".5" width="14" height="14" fill="#e8eef5" stroke="#6f7f90" /><rect x=".5" y=".5" width="14" height="3" fill="#6f7f90" /><path d="M2 6h11M2 9h11M2 12h11" stroke="#9db0c4" /></svg>
                <span className="ml-[5px]">Properties</span>
              </div>
              <div className="relative flex items-center pl-[4px] w-[145px] border-r border-[#b5b5b5] rounded-tr-[6px]">
                <svg width="16" height="17" viewBox="0 0 16 17" className="shrink-0"><path d="M4 1l4 7H0z" fill="#f0c040" /><circle cx="10" cy="11" r="5" fill="#e8474a" /><path d="M8 9l4 4m0-4l-4 4" stroke="#fff" /></svg>
                <span className="ml-[3px]">Problems Log</span>
              </div>
              <div className="relative flex items-center pl-[4px] w-[110px] border-r border-[#b5b5b5] rounded-tr-[6px]">
                <svg width="15" height="16" viewBox="0 0 15 16" className="shrink-0"><rect x="1.5" y="1.5" width="12" height="13" fill="#eef2f6" stroke="#5f7f9f" /><circle cx="7.5" cy="5" r="2" fill="#d83a3a" /><rect x="4" y="9" width="7" height="3" fill="#e6c040" /></svg>
                <span className="ml-[5px]">Problems</span>
              </div>
              <div className="relative flex items-center pl-[3px] w-[95px] border-r border-[#b5b5b5] rounded-tr-[6px]">
                <svg width="15" height="16" viewBox="0 0 15 16" className="shrink-0"><rect x="1" y="1" width="13" height="10" rx="1" fill="#cfe0f0" stroke="#2f6ea8" /><rect x="3" y="3" width="9" height="6" fill="#2f6ea8" /><path d="M4 14h7" stroke="#2f6ea8" strokeWidth="2" /></svg>
                <span className="ml-[5px]">Console</span>
              </div>
              <div className="relative flex items-center pl-[3px] w-[104px] bg-linear-to-b from-white to-[#f0f0f0]">
                <svg width="17" height="17" viewBox="0 0 17 17" className="shrink-0"><path d="M1 16l4-7 6-7 4 4-7 6z" fill="#f2d9a0" stroke="#9a8a60" /><circle cx="5" cy="12" r="2" fill="#888" /></svg>
                <span className="ml-[4px]">Search</span>
                <span className="ml-[9px] flex"><Close /></span>
              </div>
              <TabCurve w={30} h={27} />
              <div className="relative ml-auto flex items-center pb-[2px]">
                <div className="w-[20px] flex justify-center"><svg width="14" height="16" viewBox="0 0 14 16"><path d="M4 1h6v7h3l-6 7-6-7h3z" fill="#fde9a9" stroke="#c48a24" /></svg></div>
                <div className="ml-[3px] w-[20px] flex justify-center"><svg width="14" height="16" viewBox="0 0 14 16"><path d="M4 15h6V8h3L7 1 1 8h3z" fill="#fde9a9" stroke="#c48a24" /></svg></div>
                <div className="ml-[3px] w-px h-[18px] bg-[#999]" />
                <div className="ml-[6px] w-[20px] flex justify-center"><svg width="15" height="15" viewBox="0 0 15 15"><path d="M2 0l5.5 4.5L13 0l2 2-4.5 5.5L15 13l-2 2-5.5-4.5L2 15l-2-2 4.5-5.5L0 2z" fill="#7a7a7a" /></svg></div>
                <div className="ml-[3px] w-[20px] flex justify-center"><svg width="16" height="16" viewBox="0 0 16 16"><path d="M1 1l14 14M15 1L1 15" stroke="#7a7a7a" strokeWidth="3" /><path d="M1 1l9 9" stroke="#ddd" strokeWidth="1" /></svg></div>
                <div className="ml-[4px] w-px h-[18px] bg-[#999]" />
                <div className="ml-[6px] w-[20px] flex justify-center"><Expand /></div>
                <div className="ml-[4px] w-[20px] flex justify-center"><Expand minus /></div>
                <div className="ml-[3px] w-px h-[18px] bg-[#999]" />
                <div className="ml-[6px] w-[20px] flex justify-center"><Sync /></div>
                <div className="ml-[3px] w-[20px] flex justify-center"><div className="w-[12px] h-[12px] bg-[#a5a5a5] border border-[#888]" /></div>
                <div className="ml-[4px] w-[20px] flex justify-center"><svg width="17" height="17" viewBox="0 0 17 17"><path d="M1 16l4-7 6-7 4 4-7 6z" fill="#f2d9a0" stroke="#9a8a60" /><circle cx="5" cy="12" r="2" fill="#888" /></svg></div>
                <div className="ml-[5px] w-[14px] flex justify-center"><Arrow /></div>
                <div className="ml-[8px] w-[20px] flex justify-center"><svg width="15" height="15" viewBox="0 0 15 15"><rect x=".5" y="3.5" width="11" height="11" fill="#fff" stroke="#8a8360" /><rect x=".5" y="3.5" width="11" height="3" fill="#7fa9cf" /><path d="M9 6l5-5" stroke="#3a9a3a" strokeWidth="2.4" /></svg></div>
                <div className="ml-[11px] w-[8px] flex flex-col items-center gap-[1px]">
                  {[0, 1, 2].map((i) => <div key={i} className="w-[5px] h-[5px] rounded-full border border-[#888]" />)}
                </div>
                <div className="ml-[13px] mr-[11px] -mt-[8px]"><MinMax /></div>
              </div>
            </div>
            <div className="h-[27px] shrink-0 pl-[5px] border-b border-[#a0a0a0] leading-[28px]">'Data_Dictionary_Cfg' - 0 matches in workspace[Max matches per file - '500']</div>
            <div className="flex-1 bg-white" />
          </div>
        </div>
      </div>
      {/* Status bar */}
      <div className="h-[29px] shrink-0 flex items-center">
        <div className="ml-[1264px] w-px h-[26px] bg-[#bdbdbd]" />
        <div className="ml-[8px] w-[15px] h-[18px] rounded-full bg-[#f6a800] text-white text-[14px] font-bold flex items-center justify-center leading-none">!</div>
        <div className="ml-[4px] w-[2px] flex"><Dots /></div>
        <div className="ml-[1px] w-[231px] h-[27px] shrink-0 border-b border-white flex">
          <div className="w-[123px] bg-[#a0a0a0]" />
          <div className="flex-1 bg-[#f0f0f0]" />
        </div>
        <div className="ml-[-231px] w-[216px] text-center relative">314M of 550M</div>
        <div className="relative"><svg width="12" height="18" viewBox="0 0 12 18"><path d="M1 3h10M4 3V1h4v2" stroke="#6b8fbf" fill="none" /><path d="M2 4h8l-1 13H3z" fill="#9db8dc" stroke="#5f82b0" /></svg></div>
        <div className="ml-[8px] w-[2px] flex"><Dots /></div>
        <span className="ml-auto mr-[15px] mt-[17px] relative z-10 text-[19.2px] text-[#a0a0a0] tracking-normal font-['Liberation_Sans','Noto_Sans_CJK_SC',sans-serif]">CSDN @疯狂生长的陈大花</span>
      </div>
      <div className="flex-1 bg-[#e6dfdc] border-t-2 border-[#b8b8b8]" />
    </div>
  );
}
